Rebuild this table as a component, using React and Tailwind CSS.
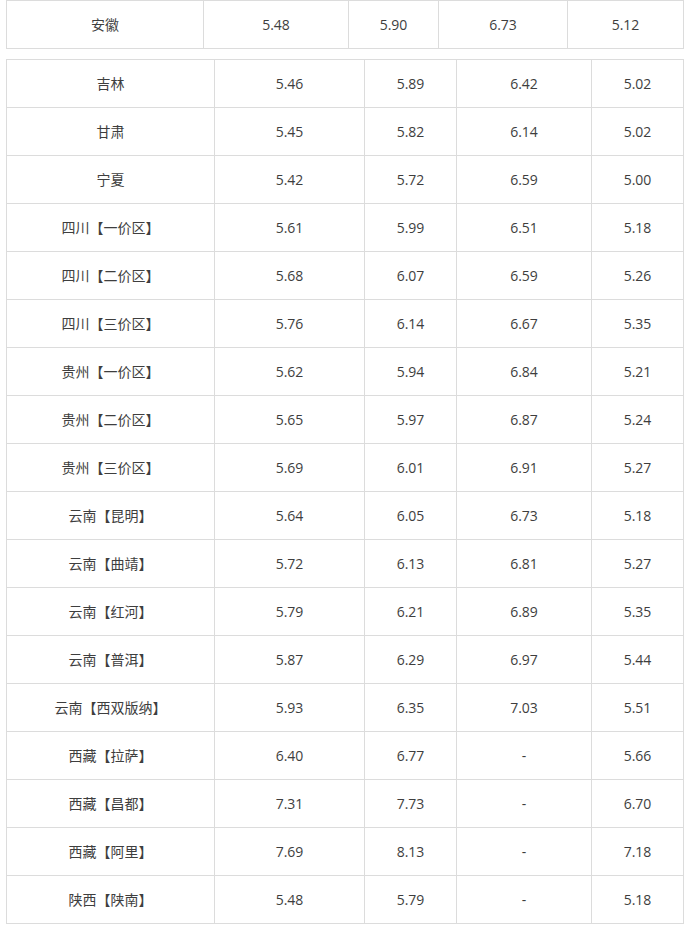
const top = ["安徽", "5.48", "5.90", "6.73", "5.12"];
const rows = [
  ["吉林", "5.46", "5.89", "6.42", "5.02"],
  ["甘肃", "5.45", "5.82", "6.14", "5.02"],
  ["宁夏", "5.42", "5.72", "6.59", "5.00"],
  ["四川【一价区】", "5.61", "5.99", "6.51", "5.18"],
  ["四川【二价区】", "5.68", "6.07", "6.59", "5.26"],
  ["四川【三价区】", "5.76", "6.14", "6.67", "5.35"],
  ["贵州【一价区】", "5.62", "5.94", "6.84", "5.21"],
  ["贵州【二价区】", "5.65", "5.97", "6.87", "5.24"],
  ["贵州【三价区】", "5.69", "6.01", "6.91", "5.27"],
  ["云南【昆明】", "5.64", "6.05", "6.73", "5.18"],
  ["云南【曲靖】", "5.72", "6.13", "6.81", "5.27"],
  ["云南【红河】", "5.79", "6.21", "6.89", "5.35"],
  ["云南【普洱】", "5.87", "6.29", "6.97", "5.44"],
  ["云南【西双版纳】", "5.93", "6.35", "7.03", "5.51"],
  ["西藏【拉萨】", "6.40", "6.77", "-", "5.66"],
  ["西藏【昌都】", "7.31", "7.73", "-", "6.70"],
  ["西藏【阿里】", "7.69", "8.13", "-", "7.18"],
  ["陕西【陕南】", "5.48", "5.79", "-", "5.18"],
];

const font = { fontFamily: '"Open Sans", "Noto Sans CJK SC", sans-serif' };

export default function App() {
  return (
    <div className="bg-white w-[688px] h-[927px] overflow-hidden text-[14px] text-[#3e3e3e]" style={font}>
      <table className="table-fixed border-collapse ml-[6px] mt-0 w-[677px]">
        <colgroup>
          <col className="w-[197px]" />
          <col className="w-[145px]" />
          <col className="w-[90px]" />
          <col className="w-[129px]" />
          <col className="w-[116px]" />
        </colgroup>
        <tbody>
          <tr className="h-[48px]">
            {top.map((c, i) => (
              <td key={i} className="border border-[#dcdcdc] text-center p-0 align-middle">{c}</td>
            ))}
          </tr>
        </tbody>
      </table>
      <table className="table-fixed border-collapse ml-[6px] mt-[10px] w-[677px]">
        <colgroup>
          <col className="w-[208px]" />
          <col className="w-[150px]" />
          <col className="w-[92px]" />
          <col className="w-[135px]" />
          <col className="w-[92px]" />
        </colgroup>
        <tbody>
          {rows.map((r, ri) => (
            <tr key={ri} className="h-[48px]">
              {r.map((c, i) => (
                <td key={i} className="border border-[#dcdcdc] text-center p-0 align-middle">{c}</td>
              ))}
            </tr>
          ))}
        </tbody>
      </table>
    </div>
  );
}
